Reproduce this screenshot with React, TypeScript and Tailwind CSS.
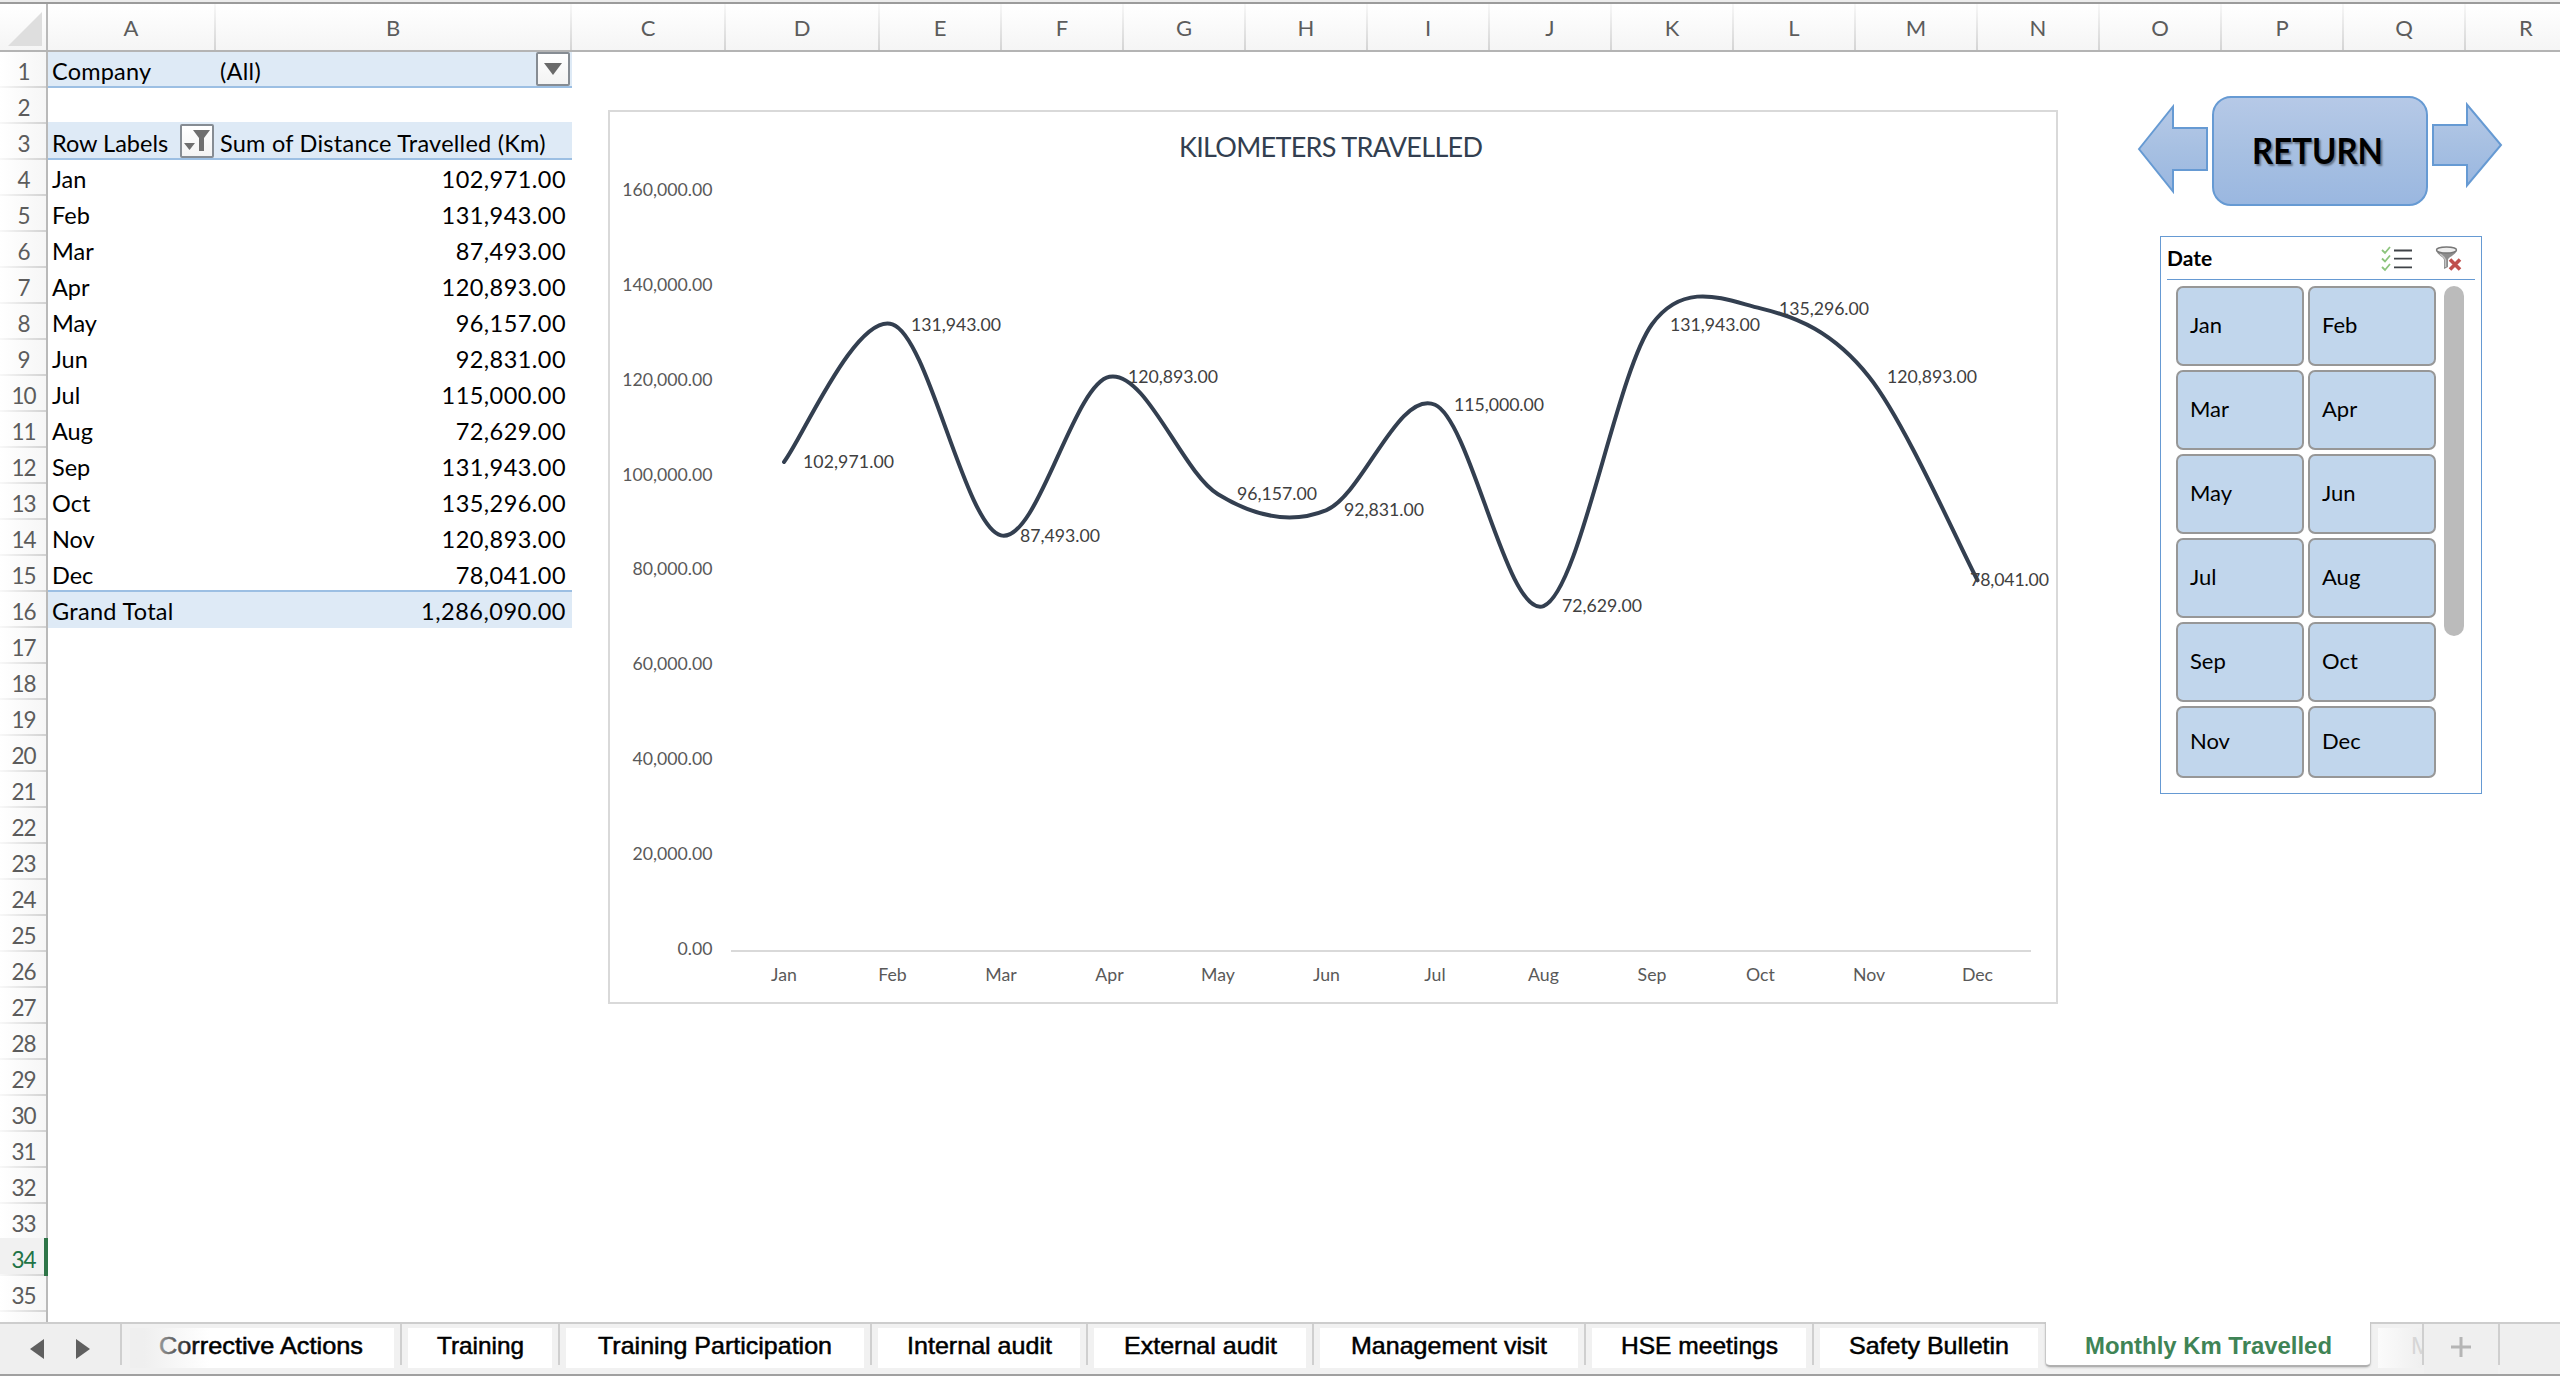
import type { ReactNode } from "react";

interface Column {
  name: string;
  width: number;
}

interface ChartPoint {
  month: string;
  value: number;
  // anchor of the value label (left edge, baseline) and its width
  label: [number, number, number];
}

interface SheetTab {
  name: string;
  width: number;
  textWidth: number;
}

const columns: Column[] = [
  { name: "A", width: 168 },
  { name: "B", width: 356 },
  { name: "C", width: 154 },
  { name: "D", width: 154 },
  ..."EFGHIJKLMNOPQR".split("").map((name) => ({ name, width: 122 })),
];

const points: ChartPoint[] = [
  { month: "Jan", value: 102971, label: [803, 468, 91] },
  { month: "Feb", value: 131943, label: [911, 331, 90] },
  { month: "Mar", value: 87493, label: [1020, 542, 80] },
  { month: "Apr", value: 120893, label: [1128, 383, 90] },
  { month: "May", value: 96157, label: [1237, 500, 80] },
  { month: "Jun", value: 92831, label: [1344, 516, 80] },
  { month: "Jul", value: 115000, label: [1454, 411, 90] },
  { month: "Aug", value: 72629, label: [1562, 612, 80] },
  { month: "Sep", value: 131943, label: [1670, 331, 90] },
  { month: "Oct", value: 135296, label: [1779, 315, 90] },
  { month: "Nov", value: 120893, label: [1887, 383, 90] },
  { month: "Dec", value: 78041, label: [1970, 586, 79] },
];

const tabs: SheetTab[] = [
  { name: "Training", width: 144, textWidth: 87 },
  { name: "Training Participation", width: 298, textWidth: 234 },
  { name: "Internal audit", width: 202, textWidth: 145 },
  { name: "External audit", width: 212, textWidth: 153 },
  { name: "Management visit", width: 258, textWidth: 196 },
  { name: "HSE meetings", width: 214, textWidth: 157 },
  { name: "Safety Bulletin", width: 218, textWidth: 160 },
];

const rowNumbers = Array.from({ length: 35 }, (_, i) => i + 1);
const axisTicks = [160000, 140000, 120000, 100000, 80000, 60000, 40000, 20000, 0];

const formatKm = (value: number) =>
  value.toLocaleString("en-US", { minimumFractionDigits: 2, maximumFractionDigits: 2 });

const pointX = (i: number) => 784 + i * 108.5;
const pointY = (value: number) => 951 - (value * 760) / 160000;

// Smoothed line: each handle is a sixth of the chord between the neighbours,
// capped at half of the segment it belongs to.
function smoothPath(pts: [number, number][]) {
  const handle = (prev: [number, number], next: [number, number], limit: number) => {
    const dx = (next[0] - prev[0]) / 6;
    const dy = (next[1] - prev[1]) / 6;
    const len = Math.hypot(dx, dy);
    const k = len > limit ? limit / len : 1;
    return [dx * k, dy * k];
  };
  let d = `M${pts[0][0]} ${pts[0][1]}`;
  for (let i = 0; i < pts.length - 1; i++) {
    const a = pts[i];
    const b = pts[i + 1];
    const limit = Math.hypot(b[0] - a[0], b[1] - a[1]) / 2;
    const h1 = handle(pts[i - 1] ?? a, b, limit);
    const h2 = handle(a, pts[i + 2] ?? b, limit);
    d += `C${a[0] + h1[0]} ${a[1] + h1[1]} ${b[0] - h2[0]} ${b[1] - h2[1]} ${b[0]} ${b[1]}`;
  }
  return d;
}

function ColumnHeader() {
  return (
    <div className="flex h-[48px] w-full shrink-0 overflow-hidden border-b-2 border-[#b4b4b4] bg-linear-to-b from-white to-[#f5f5f5]">
      <div className="h-full w-[48px] shrink-0 border-r-2 border-[#b9b9b9]">
        <svg width="46" height="46" viewBox="0 0 46 46">
          <path d="M42 8V42H8Z" fill="#dedede" />
        </svg>
      </div>
      {columns.map((col) => (
        <div key={col.name} className="flex h-full shrink-0" style={{ width: col.width }}>
          <div className="flex flex-1 items-center justify-center pt-[1px] text-[22px] text-[#5c5c5c]">
            {col.name}
          </div>
          <div className="h-full w-[2px] bg-linear-to-b from-[#f8f8f8] to-[#d4d4d4]" />
        </div>
      ))}
    </div>
  );
}

function RowHeader() {
  return (
    <div className="flex h-full w-[48px] shrink-0 flex-col">
      {rowNumbers.map((n) =>
        n === 34 ? (
          <div
            key={n}
            className="z-10 -mt-[2px] flex h-[38px] w-full shrink-0 flex-col border-r-4 border-[#2f7548] bg-[#f1f1f1] text-[#217346]"
          >
            <div className="flex flex-1 items-center justify-center pt-[9px] pl-[3px] text-[22.5px] leading-none tracking-[-1px]">
              {n}
            </div>
            <div className="h-[2px] w-full bg-linear-to-r from-[#f8f8f8] to-[#d2d2d2]" />
          </div>
        ) : (
          <div
            key={n}
            className="flex h-[36px] w-full shrink-0 flex-col border-r-2 border-[#b9b9b9] bg-linear-to-r from-white to-[#f6f6f6] text-[#5c5c5c]"
          >
            <div className="flex flex-1 items-center justify-center pt-[7px] pl-[1px] text-[22.5px] leading-none tracking-[-1px]">
              {n}
            </div>
            <div className="h-[2px] w-full bg-linear-to-r from-[#f8f8f8] to-[#d2d2d2]" />
          </div>
        ),
      )}
      <div className="w-full flex-1 border-r-2 border-[#b9b9b9] bg-linear-to-r from-white to-[#f6f6f6]" />
    </div>
  );
}

function CellButton({ children }: { children: ReactNode }) {
  return (
    <div className="flex h-[34px] w-[34px] shrink-0 items-center justify-center rounded-[2px] border-2 border-[#868c93] bg-linear-to-b from-white to-[#f3f3f3]">
      {children}
    </div>
  );
}

function PivotTable() {
  return (
    <div className="flex w-[524px] shrink-0 flex-col text-[23.5px] leading-none text-black">
      <div className="flex h-[36px] border-b-2 border-[#9cbfe3] bg-[#deeaf6] pl-[4px]">
        <div className="w-[168px] pt-[8px] tracking-[0.2px]">Company</div>
        <div className="flex-1 pt-[8px] tracking-[0.3px]">(All)</div>
        <div className="pr-[2px]">
          <CellButton>
            <svg width="18" height="12" viewBox="0 0 18 12">
              <path d="M0 0H18L9 12Z" fill="#6a6a6a" />
            </svg>
          </CellButton>
        </div>
      </div>
      <div className="h-[34px]" />
      <div className="flex h-[38px] border-b-2 border-[#9cbfe3] bg-[#deeaf6] pl-[4px]">
        <div className="w-[128px] pt-[10px]">Row Labels</div>
        <div className="w-[40px] pt-[2px]">
          <CellButton>
            <svg width="28" height="24" viewBox="0 0 28 24" fill="#6f6f6f">
              <path d="M1 14H12L6.500 21Z" />
              <path d="M10 1H27L21 9V22H16V9Z" />
            </svg>
          </CellButton>
        </div>
        <div className="pt-[10px] tracking-[0.25px] whitespace-nowrap">Sum of Distance Travelled (Km)</div>
      </div>
      {points.map((p) => (
        <div key={p.month} className="flex h-[36px] justify-between pt-[8px] pr-[6px] pl-[4px]">
          <span>{p.month}</span>
          <span className="tracking-[0.45px]">{formatKm(p.value)}</span>
        </div>
      ))}
      <div className="-mt-[2px] flex h-[38px] justify-between border-t-2 border-[#9cbfe3] bg-[#deeaf6] pt-[8px] pr-[6px] pl-[4px]">
        <span className="tracking-[0.3px]">Grand Total</span>
        <span className="tracking-[0.5px]">1,286,090.00</span>
      </div>
    </div>
  );
}

function KilometersChart() {
  const pts = points.map((p, i): [number, number] => [pointX(i), pointY(p.value)]);
  return (
    <div className="mt-[58px] ml-[36px] h-[894px] w-[1450px] shrink-0 border-2 border-[#d9d9d9] bg-white">
      <svg width="1446" height="890" viewBox="610 112 1446 890" className="block" fontSize="17.7">
        <text x="1179" y="157" fontSize="27" textLength="304" fill="#333f50">
          KILOMETERS TRAVELLED
        </text>
        {axisTicks.map((tick) => (
          <text key={tick} x="712.500" y={954.6 - (tick * 758.4) / 160000} textAnchor="end" fill="#595959">
            {formatKm(tick)}
          </text>
        ))}
        <path d="M731 951H2031" stroke="#d9d9d9" strokeWidth="2" />
        <path d={smoothPath(pts)} fill="none" stroke="#333f50" strokeWidth="4" strokeLinecap="round" />
        {points.map((p, i) => (
          <g key={p.month}>
            <text x={pointX(i)} y="981" textAnchor="middle" fill="#595959">
              {p.month}
            </text>
            <text x={p.label[0]} y={p.label[1]} textLength={p.label[2]} fill="#404040">
              {formatKm(p.value)}
            </text>
          </g>
        ))}
      </svg>
    </div>
  );
}

function ReturnButtons() {
  return (
    <svg width="366" height="112" viewBox="2137 95 366 112" className="block">
      <defs>
        <linearGradient id="shapeFill" x1="0" y1="0" x2="0" y2="1">
          <stop offset="0" stopColor="#b6c9e7" />
          <stop offset="0.500" stopColor="#a7c0e2" />
          <stop offset="1" stopColor="#9ab7e0" />
        </linearGradient>
      </defs>
      <g fill="url(#shapeFill)" stroke="#669ad3" strokeWidth="2">
        <path d="M2139 149L2173 106.500V128H2207V170H2173V191.500Z" />
        <rect x="2213" y="97" width="214" height="108" rx="18" />
        <path d="M2433 125H2467V104.500L2501 145L2467 185.500V165H2433Z" />
      </g>
      <text
        x="2252"
        y="164"
        fontSize="35.5"
        fontWeight="700"
        textLength="131"
        lengthAdjust="spacingAndGlyphs"
        className="[text-shadow:2px_2px_2px_rgba(0,0,0,0.4)]"
      >
        RETURN
      </text>
    </svg>
  );
}

function MultiSelectIcon() {
  return (
    <svg width="32" height="26" viewBox="0 0 32 26" fill="none">
      <path d="M1 4L4 7L9 1M1 12.500L4 15.500L9 9.500M1 21L4 24L9 18" stroke="#8cc47c" strokeWidth="1.800" />
      <path d="M13 4.500H31M13 12.700H31M13 21.300H31" stroke="#3f4347" strokeWidth="1.800" />
    </svg>
  );
}

function ClearFilterIcon() {
  return (
    <svg width="28" height="26" viewBox="0 0 28 26" fill="none">
      <path d="M1 4C2 9 9 11 9 14V23L13 21V14C13 11 21 9 22 4Z" fill="#8d8d8d" />
      <path d="M5 8C8 10 10 12 10.500 14V21" stroke="#c4c4c4" strokeWidth="1.500" />
      <ellipse cx="11.500" cy="4" rx="10" ry="3" fill="#efefef" stroke="#777" strokeWidth="1.400" />
      <path d="M15 13.500L25 23.500M25 13.500L15 23.500" stroke="#fff" strokeWidth="6" />
      <path d="M15 13.500L25 23.500M25 13.500L15 23.500" stroke="#c0504d" strokeWidth="3.600" />
    </svg>
  );
}

function DateSlicer() {
  return (
    <div className="mt-[29px] ml-[23px] flex h-[558px] w-[322px] flex-col border border-[#669ad3] bg-white px-[6px]">
      <div className="flex h-[43px] items-center border-b border-[#669ad3]">
        <span className="text-[21px] font-bold">Date</span>
        <div className="ml-auto flex items-center gap-[22px] pt-[2px] pr-[12px]">
          <MultiSelectIcon />
          <ClearFilterIcon />
        </div>
      </div>
      <div className="flex gap-2 pt-[6px] pl-[9px]">
        <div className="grid grid-cols-[128px_128px] gap-1 text-[22px]">
          {points.map((p, i) => (
            <div
              key={p.month}
              className={`flex items-center rounded-[7px] border-2 border-[#979797] bg-[#c1d6ec] pb-[3px] pl-[12px] ${i < 10 ? "h-[80px]" : "h-[72px]"}`}
            >
              {p.month}
            </div>
          ))}
        </div>
        <div className="h-[350px] w-[20px] rounded-full bg-[#bbbbbb]" />
      </div>
    </div>
  );
}

function TabLabel({ text, width, className }: { text: string; width: number; className?: string }) {
  return (
    <svg width={width} height="40" viewBox={`0 0 ${width} 40`} className="block overflow-visible">
      <text x="0" y="25.500" textLength={width} lengthAdjust="spacingAndGlyphs" className={className}>
        {text}
      </text>
    </svg>
  );
}

function Separator() {
  return <div className="h-[41px] w-[2px] shrink-0 bg-[#cfcfcf]" />;
}

function TabBar() {
  return (
    <div className="flex h-[54px] w-full shrink-0 overflow-hidden border-b-2 border-[#a0a0a0] bg-[#f1f1f1] font-['Liberation_Sans',Arial,sans-serif] text-[24px]">
      <div className="flex h-full w-[2045px] shrink-0 border-t-2 border-[#cdcdcd]">
        <div className="flex h-full w-[120px] shrink-0 gap-[32px] bg-[#efefef] pt-[15px] pl-[30px]">
          <svg width="14" height="20" viewBox="0 0 14 20">
            <path d="M14 0V20L0 10Z" fill="#5f5f5f" />
          </svg>
          <svg width="14" height="20" viewBox="0 0 14 20">
            <path d="M0 0V20L14 10Z" fill="#5f5f5f" />
          </svg>
        </div>
        <Separator />
        <div className="mt-1 mr-[6px] ml-[8px] flex h-[40px] w-[264px] shrink-0 bg-linear-to-r from-[#efefef] from-5% to-white to-30% pl-[29px]">
          <svg width="204" height="40" viewBox="0 0 204 40" className="block">
            <defs>
              <linearGradient id="fadeIn" x1="0" y1="0" x2="204" y2="0" gradientUnits="userSpaceOnUse">
                <stop offset="0" stopColor="#999" />
                <stop offset="0.200" stopColor="#000" />
              </linearGradient>
            </defs>
            <text
              x="0"
              y="25.500"
              textLength="204"
              lengthAdjust="spacingAndGlyphs"
              fill="url(#fadeIn)"
              stroke="url(#fadeIn)"
              strokeWidth="0.500"
            >
              Corrective Actions
            </text>
          </svg>
        </div>
        {tabs.map((tab) => (
          <div key={tab.name} className="flex shrink-0">
            <Separator />
            <div className="mx-[6px] mt-1 flex h-[40px] justify-center bg-white" style={{ width: tab.width }}>
              <TabLabel text={tab.name} width={tab.textWidth} className="fill-black stroke-black stroke-[0.5px]" />
            </div>
          </div>
        ))}
      </div>
      <div className="flex h-[45px] w-[326px] shrink-0 justify-center rounded-b-[5px] border-x border-b-2 border-[#b0b0b0] border-x-[#c8c8c8] bg-white pt-[6px] shadow-[0_1px_2px_rgba(0,0,0,0.15)]">
        <TabLabel text="Monthly Km Travelled" width={247} className="fill-[#3f8456] font-bold" />
      </div>
      <div className="flex h-full flex-1 border-t-2 border-[#cdcdcd]">
        {/* next tab, fading out under the add button */}
        <div className="mt-1 ml-[7px] h-[40px] w-[44px] shrink-0 overflow-hidden bg-linear-to-r from-[#fbfbfb] to-[#efefef] pt-[2px] pl-[33px] text-[24px] leading-[32px] text-[#d6d6d6]">
          M
        </div>
        <Separator />
        <div className="flex w-[74px] shrink-0 justify-center bg-[#efefef] pt-[13px]">
          <svg width="20" height="20" viewBox="0 0 20 20">
            <path d="M10 0V20M0 10H20" stroke="#b5b5b5" strokeWidth="3" />
          </svg>
        </div>
        <Separator />
        <div className="flex-1 bg-[#efefef]" />
      </div>
    </div>
  );
}

export default function App() {
  return (
    <div className="flex h-[1376px] w-[2560px] flex-col overflow-hidden bg-white font-[Lato,Carlito,sans-serif]">
      <div className="h-[4px] w-full shrink-0 border-b-2 border-[#9b9b9b] bg-[#ececec]" />
      <ColumnHeader />
      <div className="flex w-full flex-1 overflow-hidden">
        <RowHeader />
        <PivotTable />
        <KilometersChart />
        <div className="mt-[43px] ml-[79px] flex w-[366px] shrink-0 flex-col">
          <ReturnButtons />
          <DateSlicer />
        </div>
      </div>
      <TabBar />
    </div>
  );
}
